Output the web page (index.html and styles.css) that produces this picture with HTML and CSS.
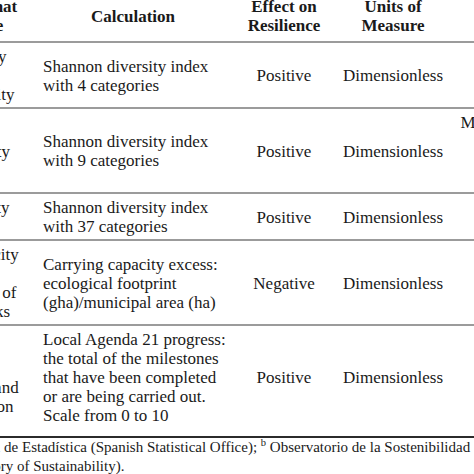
FILE: index.html
```html
<!DOCTYPE html>
<html lang="en">
<head>
<meta charset="utf-8">
<title>Resilience indicators</title>
<link rel="stylesheet" href="styles.css">
</head>
<body>
<table class="tbl">
  <thead>
    <tr>
      <th class="c-ind">Component that<br>We Measure</th>
      <th class="c-calc">Calculation</th>
      <th class="c-eff">Effect on<br>Resilience</th>
      <th class="c-unit">Units of<br>Measure</th>
      <th class="c-src">Source</th>
    </tr>
  </thead>
  <tbody>
    <tr>
      <td>Firm diversity<br>of the<br>business activity</td>
      <td class="calc">Shannon diversity index<br>with 4 categories</td>
      <td>Positive</td>
      <td>Dimensionless</td>
      <td>INE <sup>a</sup></td>
    </tr>
    <tr>
      <td>Jobs<br>in each activity<br>sector</td>
      <td class="calc">Shannon diversity index<br>with 9 categories</td>
      <td>Positive</td>
      <td>Dimensionless</td>
      <td>Ministry of Industry,<br>Trade and<br>Tourism<br>(2018)</td>
    </tr>
    <tr>
      <td>Trade diversity<br>of firms</td>
      <td class="calc">Shannon diversity index<br>with 37 categories</td>
      <td>Positive</td>
      <td>Dimensionless</td>
      <td>INE <sup>a</sup></td>
    </tr>
    <tr>
      <td>Carrying capacity<br>versus<br>the exhaustion of<br>resource stocks</td>
      <td class="calc">Carrying capacity excess:<br>ecological footprint<br>(gha)/municipal area (ha)</td>
      <td>Negative</td>
      <td>Dimensionless</td>
      <td>OSE <sup>b</sup></td>
    </tr>
    <tr class="last">
      <td>Local<br>sustainable<br>commitments and<br>their application</td>
      <td class="calc">Local Agenda 21 progress:<br>the total of the milestones<br>that have been completed<br>or are being carried out.<br>Scale from 0 to 10</td>
      <td>Positive</td>
      <td>Dimensionless</td>
      <td>OSE <sup>b</sup></td>
    </tr>
  </tbody>
</table>
<div class="note">
  <div class="note-l1"><sup>a</sup> Instituto Nacional de Estadística (Spanish Statistical Office); <sup>b</sup> Observatorio de la Sostenibilidad</div>
  <div class="note-l2">(Observatory of Sustainability).</div>
</div>
</body>
</html>
```
FILE: styles.css
```css
html, body {
  margin: 0;
  padding: 0;
  overflow: hidden;
  background: #ffffff;
}

body {
  font-family: "Liberation Serif", "DejaVu Serif", serif;
  font-size: 17px;
  line-height: 19px;
  color: #1a1a1a;
}

.tbl {
  border-collapse: collapse;
  table-layout: fixed;
  width: 728px;
  margin: -8px 0 0 -117px;
}

.tbl th,
.tbl td {
  box-sizing: border-box;
}

.c-ind { width: 150px; }
.c-calc { width: 200px; }
.c-eff { width: 102px; }
.c-unit { width: 116px; }
.c-src { width: 160px; }

.tbl th {
  font-weight: bold;
  padding: 5px 4px 6px;
  border-bottom: 2px solid #9b9b9b;
  text-align: center;
  vertical-align: middle;
}

.tbl td {
  padding: 4px 4px 3px;
  border-bottom: 2px solid #9b9b9b;
  text-align: center;
  vertical-align: middle;
}

.tbl td.calc {
  text-align: left;
  padding-left: 10px;
  white-space: nowrap;
}

.tbl tr.last td {
  padding-bottom: 11px;
  border-bottom-color: #2b2b2b;
}

sup {
  font-size: 0.7em;
  line-height: 0;
  vertical-align: super;
}

.note {
  font-size: 15px;
  line-height: 19px;
  white-space: nowrap;
}

.note-l1 { margin-left: -116px; }
.note-l2 { margin-left: -66px; }
```
